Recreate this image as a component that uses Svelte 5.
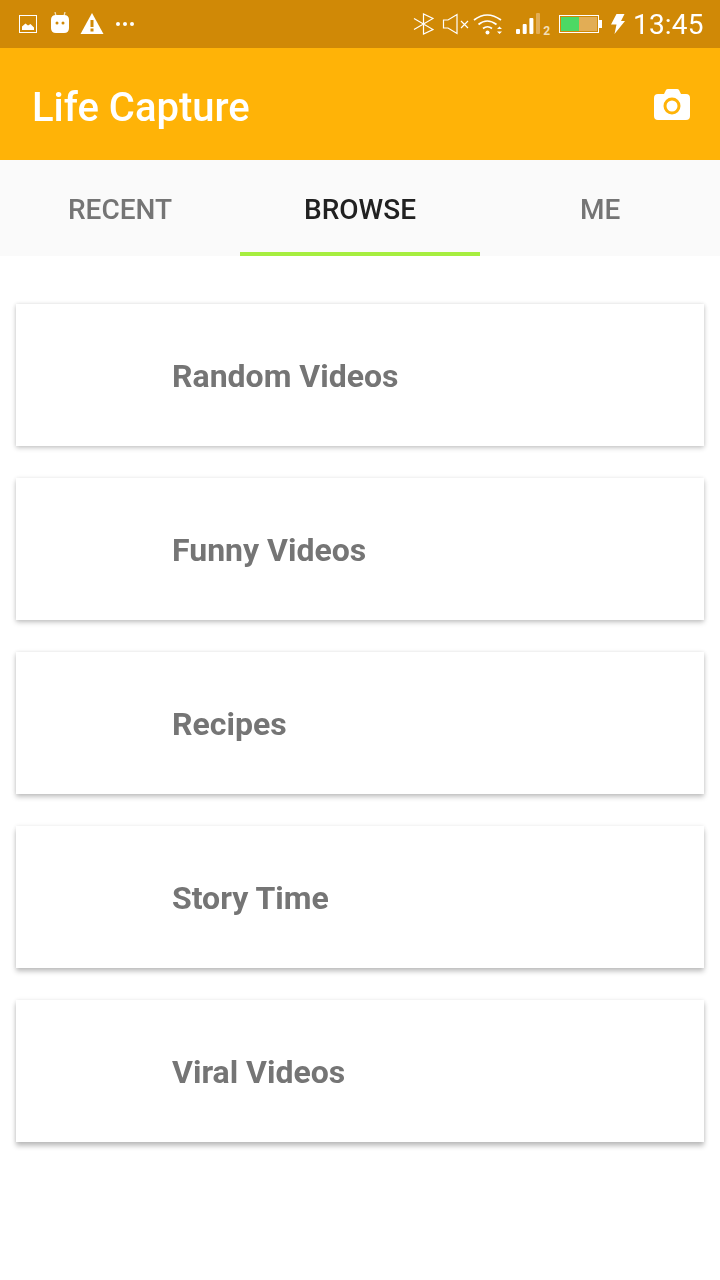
<script>
  const tabs = [
    { label: 'RECENT', active: false },
    { label: 'BROWSE', active: true },
    { label: 'ME', active: false }
  ];
  const categories = ['Random Videos', 'Funny Videos', 'Recipes', 'Story Time', 'Viral Videos'];

  // lower cards throw a longer shadow, like the light source on the device
  function cardShadow(i) {
    const y = 2 + i * 0.5;
    return `0 ${y}px 5px rgba(0, 0, 0, ${0.2 + i * 0.012}), 0 0 4px rgba(0, 0, 0, 0.09)`;
  }
</script>

<div class="page">
  <div class="status-bar">
    <div class="status-left">
      <svg width="18" height="18" viewBox="0 0 18 18">
        <rect x="0.5" y="0.5" width="17" height="17" fill="none" stroke="#fff" />
        <path d="M3 15 V11.500 L6.500 8.500 L9 10.500 L11.500 9 L15 12.500 V15 Z" fill="#fff" />
      </svg>
      <svg class="bot" width="18" height="21" viewBox="0 0 18 21">
        <path d="M5 4 L4 0 M13 4 L14 0" stroke="#f3dfb8" stroke-width="1.300" />
        <path d="M5 3 H13 Q18 3 18 8 V16 Q18 21 13 21 H5 Q0 21 0 16 V8 Q0 3 5 3 Z" fill="#fff" />
        <circle cx="6" cy="11" r="1.500" fill="#d08906" />
        <circle cx="12" cy="11" r="1.500" fill="#d08906" />
      </svg>
      <svg class="warn" width="24" height="21" viewBox="0 0 24 21">
        <path d="M12 0 L23.500 21 H0.500 Z" fill="#fff" />
        <rect x="10.500" y="7" width="3" height="7" fill="#d08906" />
        <rect x="10.500" y="15.500" width="3" height="3" fill="#d08906" />
      </svg>
      <div class="dots"><span></span><span></span><span></span></div>
    </div>
    <div class="status-right">
      <svg width="21" height="22" viewBox="0 0 21 22">
        <path d="M1 5.500 L20 16.500 L10.500 21 V1 L20 5.500 L1 16.500" fill="none" stroke="#fff" stroke-width="1.200" />
      </svg>
      <svg class="mute" width="27" height="22" viewBox="0 0 27 22">
        <path d="M1.500 7 H6 L15 1.500 V20.500 L6 15 H1.500 Z" fill="none" stroke="#fff" stroke-width="1.200" />
        <path d="M19 8 L26 15 M26 8 L19 15" stroke="#fff" stroke-width="1.200" />
      </svg>
      <svg class="wifi" width="30" height="22" viewBox="0 0 30 22">
        <path d="M1 7 Q14 -3 28 7 M5.500 11.500 Q14 4.500 23.500 11.500 M10 15.500 Q14.500 12 19 15.500" fill="none" stroke="#fff" stroke-width="1.700" />
        <circle cx="14.500" cy="19.500" r="2" fill="#fff" />
        <path d="M24 16 L26.500 13.500 L29 16 Z M24 18.500 H29 L26.500 21 Z" fill="#fff" />
      </svg>
      <svg class="signal" width="24" height="21" viewBox="0 0 24 21">
        <rect x="0" y="16" width="4" height="5" rx="1" fill="#fff" />
        <rect x="6.700" y="11" width="4" height="10" rx="1" fill="#fff" />
        <rect x="13.400" y="5" width="4" height="16" rx="1" fill="#fff" />
        <rect x="20" y="0" width="4" height="21" rx="1" fill="#e2ad55" />
      </svg>
      <span class="sim">2</span>
      <div class="battery">
        <div class="battery-body">
          <div class="battery-level"><div class="battery-fill" style="width: 50%"></div></div>
        </div>
        <div class="battery-tip"></div>
      </div>
      <svg class="bolt" width="14" height="20" viewBox="0 0 14 20">
        <path d="M5.500 0 H13.500 L10 7 H14 L3.500 20 L5.500 10.500 H0 Z" fill="#fff" />
      </svg>
      <span class="clock text">13:45</span>
    </div>
  </div>

  <header class="app-bar">
    <h1 class="text">Life Capture</h1>
    <svg width="36" height="32" viewBox="0 0 36 32">
      <path d="M4 6 H10 L12 2 Q12.500 1 14 1 H23 Q24.500 1 25 2 L27 6 H32 Q36 6 36 10 V28 Q36 32 32 32 H4 Q0 32 0 28 V10 Q0 6 4 6 Z" fill="#fff" />
      <circle cx="18" cy="18" r="7" fill="none" stroke="#ffb307" stroke-width="3" />
    </svg>
  </header>

  <nav class="tabs">
    {#each tabs as tab}
      <div class="tab" class:active={tab.active}><span class="text">{tab.label}</span></div>
    {/each}
  </nav>

  <main class="list">
    {#each categories as name, i}
      <div class="card" style="box-shadow: {cardShadow(i)}"><span class="text">{name}</span></div>
    {/each}
  </main>
</div>

<style>
  :global(body) {
    background: #fff;
  }

  .page {
    width: 720px;
    height: 1280px;
    font-family: Roboto, sans-serif;
    background: #fff;
  }

  /* own layer, so the glyphs get greyscale antialiasing like the device */
  .text {
    will-change: transform;
  }

  .status-bar {
    height: 48px;
    background: #d08906;
    display: flex;
    align-items: center;
    justify-content: space-between;
    padding: 0 16px 0 19px;
  }

  .status-left {
    display: flex;
    align-items: center;
  }

  .bot {
    margin: -3px 0 0 14px;
  }

  .warn {
    margin: -1px 0 0 11px;
  }

  .dots {
    display: flex;
    gap: 3px;
    margin-left: 12px;
  }

  .dots span {
    width: 4px;
    height: 4px;
    border-radius: 50%;
    background: #fff;
  }

  .status-right {
    display: flex;
    align-items: center;
  }

  .mute {
    margin-left: 8px;
  }

  .wifi {
    margin-left: 4px;
  }

  .signal {
    margin: -1px 0 0 13px;
  }

  .sim {
    width: 7px;
    font-size: 12px;
    font-weight: 700;
    color: #f3dfb8;
    margin: 13px 0 0 3px;
  }

  .battery {
    display: flex;
    align-items: center;
    margin-left: 9px;
  }

  .battery-body {
    width: 40px;
    height: 18px;
    box-sizing: border-box;
    border: 1px solid #fff;
    padding: 1px;
  }

  .battery-level {
    height: 100%;
    background: #e2ad55;
  }

  .battery-fill {
    height: 100%;
    background: #4cd964;
  }

  .battery-tip {
    width: 3px;
    height: 8px;
    background: #fff;
  }

  .bolt {
    margin-left: 9px;
  }

  .clock {
    font-size: 28px;
    letter-spacing: 0.2px;
    color: #fff;
    margin-left: 8px;
  }

  .app-bar {
    height: 112px;
    background: #ffb307;
    display: flex;
    align-items: center;
    justify-content: space-between;
    padding: 0 30px 0 32px;
  }

  .app-bar h1 {
    margin: 6px 0 0;
    font-size: 40px;
    font-weight: 500;
    color: #fff;
  }

  .tabs {
    display: grid;
    grid-template-columns: repeat(3, 1fr);
    height: 96px;
    background: #fafafa;
  }

  .tab {
    display: flex;
    align-items: center;
    justify-content: center;
    font-size: 28px;
    font-weight: 500;
    color: #757575;
    box-sizing: border-box;
    border-bottom: 4px solid transparent;
    padding-top: 6px;
  }

  .tab.active {
    color: #212121;
    border-bottom-color: #a6ee3f;
  }

  .list {
    display: flex;
    flex-direction: column;
    gap: 32px;
    padding: 48px 16px 0;
  }

  .card {
    height: 142px;
    box-sizing: border-box;
    display: flex;
    align-items: center;
    padding: 2px 0 0 156px;
    font-size: 32px;
    font-weight: 700;
    color: #757575;
    background: #fff;
  }
</style>
